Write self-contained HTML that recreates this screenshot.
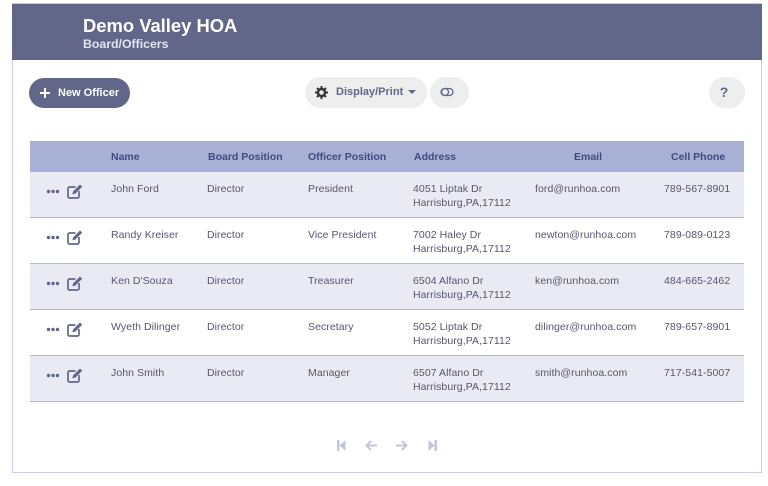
<!DOCTYPE html>
<html><head><meta charset="utf-8"><style>
html,body{margin:0;padding:0;background:#fff}
body{width:768px;height:486px;position:relative;overflow:hidden;font-family:"Liberation Sans",sans-serif;color:#55566e;font-size:10.5px}
.a{position:absolute;white-space:nowrap}
.r{position:absolute;left:30px;width:714px;height:45px;border-bottom:1px solid #b4b8cf}
.h{position:absolute;top:151px;font-weight:bold;color:#45487f;font-size:10.5px;line-height:13px}
.t{position:absolute;line-height:14px;white-space:nowrap;letter-spacing:.07px}
</style></head><body>
<div class="a" style="left:12px;top:4px;width:748px;height:468px;border:1px solid #c9cde8;border-top:0"></div>
<div class="a" style="left:12px;top:3px;width:750px;height:57px;background:#62678a;border-top:1px solid #c4c8de;box-sizing:border-box"></div>
<div class="a" style="left:83px;top:15px;color:#fff;font-weight:bold;font-size:18.4px;line-height:22px">Demo Valley HOA</div>
<div class="a" style="left:83px;top:37px;color:#e3e5f0;font-weight:bold;font-size:12.3px;line-height:15px">Board/Officers</div>
<div class="a" style="left:29px;top:78px;width:101px;height:30px;border-radius:15px;background:#62678a"></div>
<svg class="a" style="left:39px;top:87px" width="12" height="12"><path d="M6 1v10M1 6h10" stroke="#fff" stroke-width="2"/></svg>
<div class="a" style="left:58px;top:86px;color:#fff;font-weight:bold;font-size:11px;line-height:14px">New Officer</div>
<div class="a" style="left:305px;top:77px;width:122px;height:31px;border-radius:16px;background:#eeeeee"></div>
<svg class="a" style="left:315px;top:86px" width="13" height="13" viewBox="0 0 13 13"><circle cx="6.5" cy="6.5" r="3.5" fill="none" stroke="#333" stroke-width="2.4"/><path d="M6.5 0v3M6.500 10v3M0 6.500h3M10 6.500h3M2 2l2 2M9 9l2 2M11 2L9 4M2 11l2-2" stroke="#333" stroke-width="2"/></svg>
<div class="a" style="left:336px;top:85px;color:#62678a;font-weight:bold;font-size:11px;line-height:14px">Display/Print</div>
<div class="a" style="left:408px;top:90px;width:0;height:0;border:4px solid transparent;border-top:4px solid #62678a;border-bottom:0"></div>
<div class="a" style="left:430px;top:77px;width:39px;height:31px;border-radius:16px;background:#eeeeee"></div>
<svg class="a" style="left:440px;top:87px" width="14" height="10" viewBox="0 0 14 10"><rect x="1" y="1.500" width="12" height="7" rx="3.500" fill="none" stroke="#62678a" stroke-width="1.300"/><circle cx="5" cy="5" r="3.500" fill="none" stroke="#62678a" stroke-width="1.300"/></svg>
<div class="a" style="left:709px;top:77px;width:36px;height:31px;border-radius:16px;background:#eeeeee"></div>
<div class="a" style="left:708px;top:84px;width:32px;text-align:center;color:#62678a;font-weight:bold;font-size:14px;line-height:17px">?</div>

<div class="a" style="left:30px;top:141px;width:714px;height:31px;background:#a9b0d5"></div>
<div class="h" style="left:111px">Name</div>
<div class="h" style="left:208px">Board Position</div>
<div class="h" style="left:308px">Officer Position</div>
<div class="h" style="left:414px">Address</div>
<div class="h" style="left:574px">Email</div>
<div class="h" style="left:671px">Cell Phone</div>

<div class="r" style="top:172px;background:#e9eaf4"></div>
<div class="r" style="top:218px;background:#fff"></div>
<div class="r" style="top:264px;background:#e9eaf4"></div>
<div class="r" style="top:310px;background:#fff"></div>
<div class="r" style="top:356px;background:#e9eaf4"></div>

<svg class="a" style="left:46px;top:182px" width="40" height="202" viewBox="0 0 40 202">
<defs><g id="x"><circle cx="2.500" cy="9.500" r="1.700" fill="#62678a"/><circle cx="7" cy="9.500" r="1.700" fill="#62678a"/><circle cx="11.500" cy="9.500" r="1.700" fill="#62678a"/><path d="M33 9v5.500a1.500 1.500 0 0 1-1.500 1.500h-8a1.500 1.500 0 0 1-1.500-1.500v-8a1.500 1.500 0 0 1 1.500-1.500h6" fill="none" stroke="#62678a" stroke-width="1.700"/><path d="M27 9.500l7-7 2.200 2.200-7 7-2.800.6z" fill="#62678a"/></g></defs>
<use href="#x"/><use href="#x" y="46"/><use href="#x" y="92"/><use href="#x" y="138"/><use href="#x" y="184"/></svg>

<div class="t" style="left:111px;top:182px">John Ford</div><div class="t" style="left:207px;top:182px">Director</div><div class="t" style="left:308px;top:182px">President</div><div class="t" style="left:413px;top:182px">4051 Liptak Dr<br>Harrisburg,PA,17112</div><div class="t" style="left:535px;top:182px">ford@runhoa.com</div><div class="t" style="left:664px;top:182px">789-567-8901</div>
<div class="t" style="left:111px;top:228px">Randy Kreiser</div><div class="t" style="left:207px;top:228px">Director</div><div class="t" style="left:308px;top:228px">Vice President</div><div class="t" style="left:413px;top:228px">7002 Haley Dr<br>Harrisburg,PA,17112</div><div class="t" style="left:535px;top:228px">newton@runhoa.com</div><div class="t" style="left:664px;top:228px">789-089-0123</div>
<div class="t" style="left:111px;top:274px">Ken D'Souza</div><div class="t" style="left:207px;top:274px">Director</div><div class="t" style="left:308px;top:274px">Treasurer</div><div class="t" style="left:413px;top:274px">6504 Alfano Dr<br>Harrisburg,PA,17112</div><div class="t" style="left:535px;top:274px">ken@runhoa.com</div><div class="t" style="left:664px;top:274px">484-665-2462</div>
<div class="t" style="left:111px;top:320px">Wyeth Dilinger</div><div class="t" style="left:207px;top:320px">Director</div><div class="t" style="left:308px;top:320px">Secretary</div><div class="t" style="left:413px;top:320px">5052 Liptak Dr<br>Harrisburg,PA,17112</div><div class="t" style="left:535px;top:320px">dilinger@runhoa.com</div><div class="t" style="left:664px;top:320px">789-657-8901</div>
<div class="t" style="left:111px;top:366px">John Smith</div><div class="t" style="left:207px;top:366px">Director</div><div class="t" style="left:308px;top:366px">Manager</div><div class="t" style="left:413px;top:366px">6507 Alfano Dr<br>Harrisburg,PA,17112</div><div class="t" style="left:535px;top:366px">smith@runhoa.com</div><div class="t" style="left:664px;top:366px">717-541-5007</div>

<svg class="a" style="left:336px;top:439px" width="104" height="13" viewBox="0 0 104 13" fill="#c3c6d8" stroke="none">
<path d="M1 1h2.500v11H1zM3.500 6.500L9.500 1v11z"/>
<path d="M30 6.500h11M35 2l-4.500 4.500L35 11" fill="none" stroke="#c3c6d8" stroke-width="2"/>
<path d="M60 6.500h11M66 2l4.500 4.500L66 11" fill="none" stroke="#c3c6d8" stroke-width="2"/>
<path d="M101 1h-2.500v11H101zM98.500 6.500L92.500 1v11z"/>
</svg>
</body></html>
